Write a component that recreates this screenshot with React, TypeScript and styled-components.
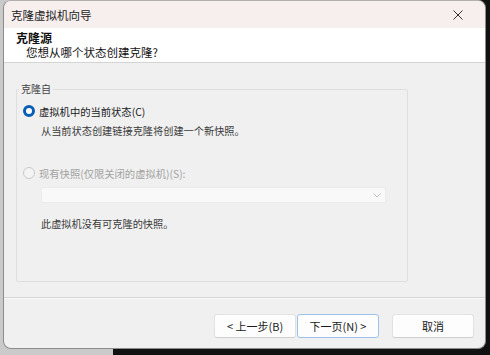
import { FC } from "react";
import styled, { createGlobalStyle } from "styled-components";

const GlobalStyle = createGlobalStyle`
  html, body {
    margin: 0;
    padding: 0;
    height: 355px;
    overflow: hidden;
  }
  body {
    background: linear-gradient(to right, #cacaca 0, #cacaca 113px, #111 113px);
    font-family: "Noto Sans CJK SC", "Noto Sans", sans-serif;
  }
`;

const Window = styled.div`
  box-sizing: border-box;
  margin: 0 4px 0 3px;
  width: 483px;
  height: 349px;
  border: 1px solid #8c8c8c;
  border-top-color: #b0b0b0;
  border-radius: 8px;
  overflow: hidden;
  display: flex;
  flex-direction: column;
  background: #f0f0f0;
`;

const TitleBar = styled.div`
  height: 27px;
  flex: none;
  display: flex;
  align-items: center;
  justify-content: space-between;
  padding: 0 22px 0 7px;
  background: #f7efee;
`;

const Title = styled.span`
  font-size: 11.5px;
  color: #1c1c1c;
  line-height: 14px;
`;

const Header = styled.div`
  height: 34px;
  flex: none;
  box-sizing: content-box;
  padding: 0;
  background: #fff;
  border-bottom: 1px solid #d4d4d4;
  display: flex;
  flex-direction: column;
  justify-content: center;
`;

const Heading = styled.div<{ $indent: number; $bold?: boolean }>`
  padding-left: ${(p) => p.$indent}px;
  font-size: ${(p) => (p.$bold ? 12 : 11.5)}px;
  font-weight: ${(p) => (p.$bold ? 700 : 400)};
  line-height: 14px;
  color: #111;
`;

const Content = styled.div`
  height: 234px;
  flex: none;
  box-sizing: border-box;
  padding: 21px 0 0 12px;
`;

const Group = styled.fieldset`
  box-sizing: border-box;
  width: 392px;
  height: 198px;
  margin: 0;
  padding: 0;
  border: 1px solid #dedede;
  border-radius: 2px;
  display: flex;
  flex-direction: column;
  align-items: flex-start;
`;

const Legend = styled.legend`
  font-size: 10px;
  line-height: 10px;
  color: #444;
  padding: 0 2px;
  margin-left: 2px;
`;

const RadioRow = styled.label<{ $top: number; $disabled?: boolean }>`
  display: flex;
  align-items: center;
  gap: 4px;
  height: 14px;
  margin-top: ${(p) => p.$top}px;
  padding-left: 6px;
  font-size: 10.3px;
  color: ${(p) => (p.$disabled ? "#a2a2a2" : "#1a1a1a")};
`;

const RadioDot = styled.span<{ $checked?: boolean }>`
  box-sizing: border-box;
  width: 12px;
  height: 12px;
  border-radius: 50%;
  flex: none;
  background: ${(p) => (p.$checked ? "#fff" : "#f4f4f4")};
  border: ${(p) => (p.$checked ? "3.5px solid #0a5db5" : "1px solid #c9c9c9")};
`;

const Note = styled.div<{ $top: number }>`
  margin-top: ${(p) => p.$top}px;
  padding-left: 24px;
  font-size: 10.2px;
  line-height: 14px;
  color: #3a3a3a;
`;

const Select = styled.div`
  box-sizing: border-box;
  margin: 7px 0 0 24px;
  width: 345px;
  height: 16px;
  background: #f9f9f9;
  border: 1px solid #ececec;
  border-radius: 2px;
  display: flex;
  align-items: center;
  justify-content: flex-end;
  padding-right: 4px;
`;

const Footer = styled.div`
  flex: 1;
  border-top: 1px solid #d6d6d6;
  box-shadow: inset 0 1px 0 #f8f8f8;
  display: flex;
  justify-content: flex-end;
  align-items: flex-start;
  padding: 16px 11px 0 0;
`;

const Button = styled.button<{ $primary?: boolean; $gap: number }>`
  box-sizing: border-box;
  width: 82px;
  height: 24px;
  margin-left: ${(p) => p.$gap}px;
  background: #fdfdfd;
  border: 1px solid ${(p) => (p.$primary ? "#9cc2ea" : "#e2e2e2")};
  border-bottom-color: ${(p) => (p.$primary ? "#9cc2ea" : "#d0d0d0")};
  border-radius: 3px;
  font-family: "Noto Sans CJK SC", "Noto Sans", sans-serif;
  font-size: 11px;
  color: #1a1a1a;
  padding: 0;
`;

const App: FC = () => (
  <>
    <GlobalStyle />
    <Window>
      <TitleBar>
        <Title>克隆虚拟机向导</Title>
        <svg width="10" height="10" viewBox="0 0 10 10">
          <path d="M0.5 0.5 L9.5 9.5 M9.5 0.5 L0.5 9.5" stroke="#333" strokeWidth="1" />
        </svg>
      </TitleBar>
      <Header>
        <Heading $indent={12} $bold>
          克隆源
        </Heading>
        <Heading $indent={22}>您想从哪个状态创建克隆?</Heading>
      </Header>
      <Content>
        <Group>
          <Legend>克隆自</Legend>
          <RadioRow $top={10}>
            <RadioDot $checked />
            虚拟机中的当前状态(C)
          </RadioRow>
          <Note $top={6}>从当前状态创建链接克隆将创建一个新快照。</Note>
          <RadioRow $top={28} $disabled>
            <RadioDot />
            现有快照(仅限关闭的虚拟机)(S):
          </RadioRow>
          <Select>
            <svg width="8" height="5" viewBox="0 0 8 5">
              <path d="M0.5 0.5 L4 4 L7.5 0.5" fill="none" stroke="#bdbdbd" strokeWidth="1" />
            </svg>
          </Select>
          <Note $top={14}>此虚拟机没有可克隆的快照。</Note>
        </Group>
      </Content>
      <Footer>
        <Button $gap={0}>&lt; 上一步(B)</Button>
        <Button $gap={1} $primary>
          下一页(N) &gt;
        </Button>
        <Button $gap={13}>取消</Button>
      </Footer>
    </Window>
  </>
);

export default App;
